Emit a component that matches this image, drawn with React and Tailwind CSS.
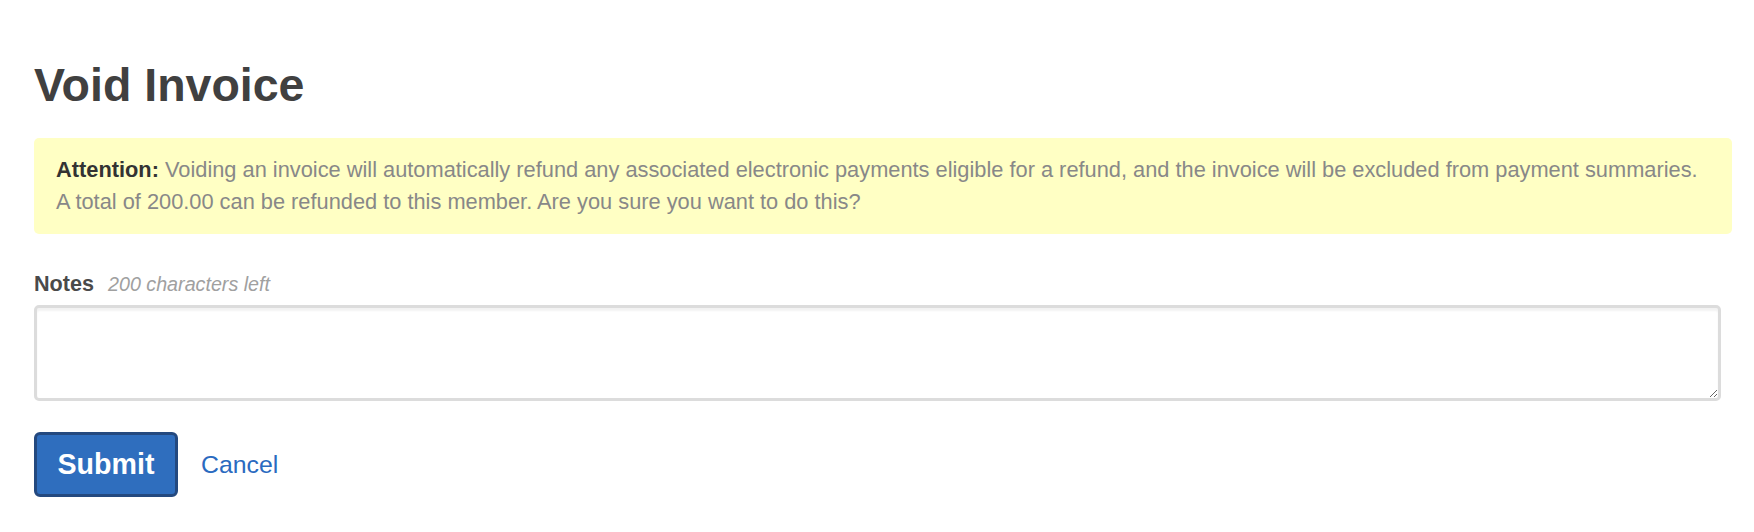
import React, { useState } from 'react';

const MAX_CHARS = 200;

export default function App() {
  const [notes, setNotes] = useState('');

  return (
    <div className="min-h-screen bg-white pl-[34px] pr-[22px] pt-[60px] font-['Liberation_Sans',Arial,sans-serif]">
      <h1 className="text-[46.5px] leading-[50px] font-bold text-[#404040]">Void Invoice</h1>

      <div className="mt-[28px] h-[96px] rounded-[5px] bg-[#ffffc4] pl-[22px] pr-4 pt-[16px] text-[21.8px] leading-[32px] text-[#888888]">
        <strong className="font-bold text-[#333333]">Attention:</strong> Voiding an invoice will automatically refund any
        associated electronic payments eligible for a refund, and the invoice will be excluded from payment summaries.
        <br />
        A total of 200.00 can be refunded to this member. Are you sure you want to do this?
      </div>

      <form onSubmit={(e) => e.preventDefault()}>
        <div className="mt-[35px] flex items-baseline gap-[14px] leading-[30px]">
          <label className="text-[21.6px] font-bold text-[#4a4a4a]">Notes</label>
          <span className="text-[19.7px] italic text-[#a0a0a0]">{MAX_CHARS - notes.length} characters left</span>
        </div>

        <textarea
          value={notes}
          maxLength={MAX_CHARS}
          onChange={(e) => setNotes(e.target.value)}
          className="mt-[6px] block h-[96px] w-[1687px] rounded-[5px] border-[3px] border-[#dcdcdc] bg-white px-3 py-2 text-[19.5px] text-[#333] shadow-[inset_0_3px_2px_rgba(0,0,0,0.05)] outline-none"
        />

        <div className="mt-[31px] flex items-center gap-[23px]">
          <button
            type="submit"
            className="h-[65px] w-[144px] rounded-[6px] border-[3px] border-[#24497f] bg-[#2f6ebe] text-[28.6px] font-bold text-white"
          >
            Submit
          </button>
          <button type="button" className="text-[24.8px] text-[#2a6ac0] hover:underline">
            Cancel
          </button>
        </div>
      </form>
    </div>
  );
}
